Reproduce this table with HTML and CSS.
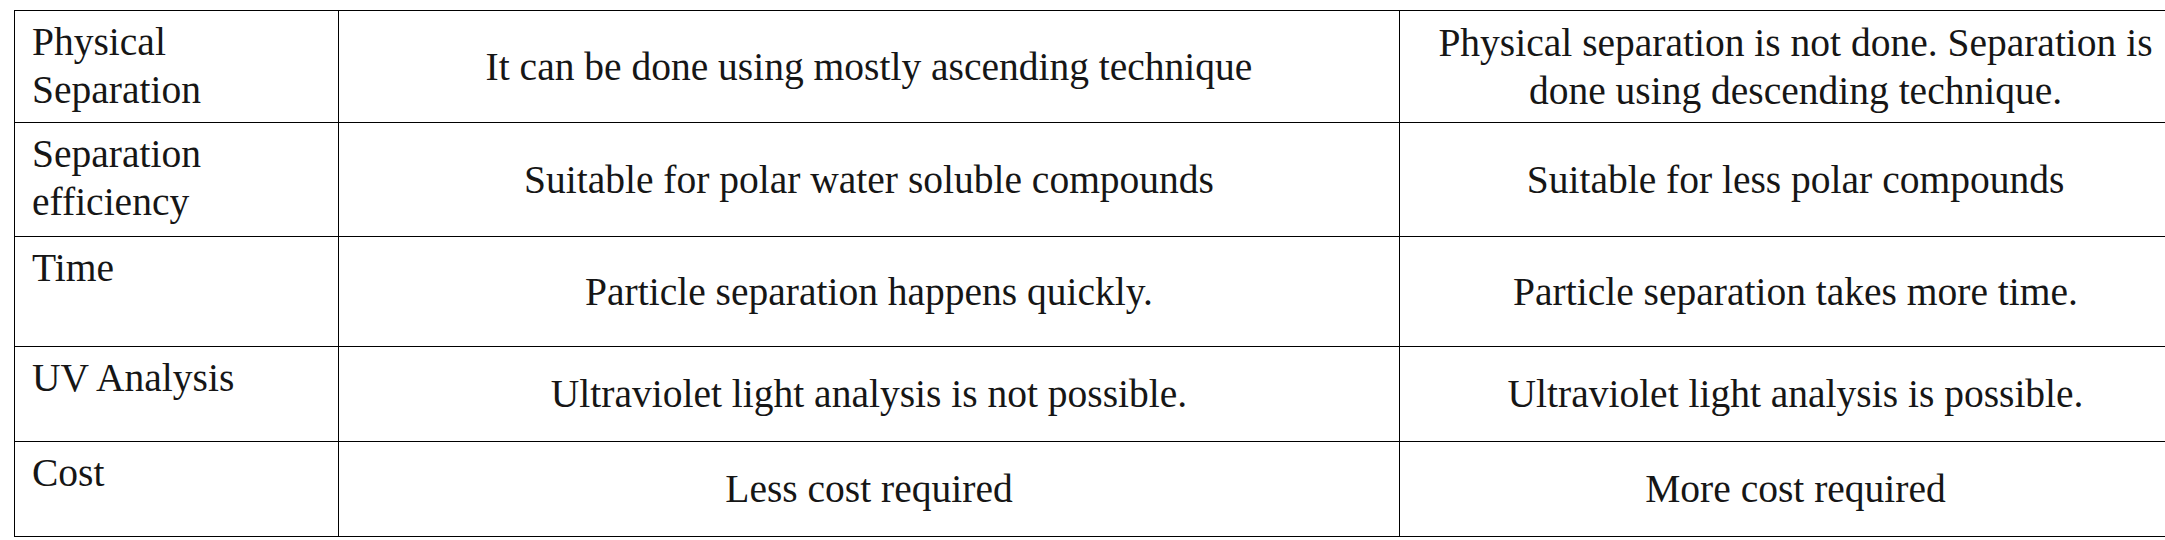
FILE: index.html
```html
<!DOCTYPE html>
<html lang="en">
<head>
<meta charset="utf-8">
<title>Comparison table</title>
<link rel="stylesheet" href="styles.css">
</head>
<body>
<table class="compare">
  <colgroup>
    <col class="c-label">
    <col class="c-a">
    <col class="c-b">
  </colgroup>
  <tbody>
    <tr class="row row-1">
      <td class="label">Physical Separation</td>
      <td class="val">It can be done using mostly ascending technique</td>
      <td class="val">Physical separation is not done. Separation is done using descending technique.</td>
    </tr>
    <tr class="row row-2">
      <td class="label">Separation efficiency</td>
      <td class="val">Suitable for polar water soluble compounds</td>
      <td class="val">Suitable for less polar compounds</td>
    </tr>
    <tr class="row row-3">
      <td class="label">Time</td>
      <td class="val">Particle separation happens quickly.</td>
      <td class="val">Particle separation takes more time.</td>
    </tr>
    <tr class="row row-4">
      <td class="label">UV Analysis</td>
      <td class="val">Ultraviolet light analysis is not possible.</td>
      <td class="val">Ultraviolet light analysis is possible.</td>
    </tr>
    <tr class="row row-5">
      <td class="label">Cost</td>
      <td class="val">Less cost required</td>
      <td class="val">More cost required</td>
    </tr>
  </tbody>
</table>
</body>
</html>
```

FILE: styles.css
```css
html, body {
  margin: 0;
  padding: 0;
  background: #ffffff;
}

body {
  width: 2165px;
  overflow: hidden;
  font-family: "Liberation Serif", "Times New Roman", serif;
  color: #161616;
}

.compare {
  margin: 10px 0 0 14px;
  border-collapse: collapse;
  table-layout: fixed;
  width: 2177px;
  font-size: 39.5px;
  line-height: 48px;
}

.c-label { width: 324px; }
.c-a { width: 1061px; }
.c-b { width: 792px; }

.compare td {
  border: 1px solid #000;
  padding: 0 12px;
}

.row-1 { height: 112px; }
.row-2 { height: 114px; }
.row-3 { height: 110px; }
.row-4 { height: 95px; }
.row-5 { height: 95px; }

.label {
  vertical-align: top;
  text-align: left;
  padding-top: 7px !important;
  padding-left: 17px !important;
}

.val {
  vertical-align: middle;
  text-align: center;
}
```
